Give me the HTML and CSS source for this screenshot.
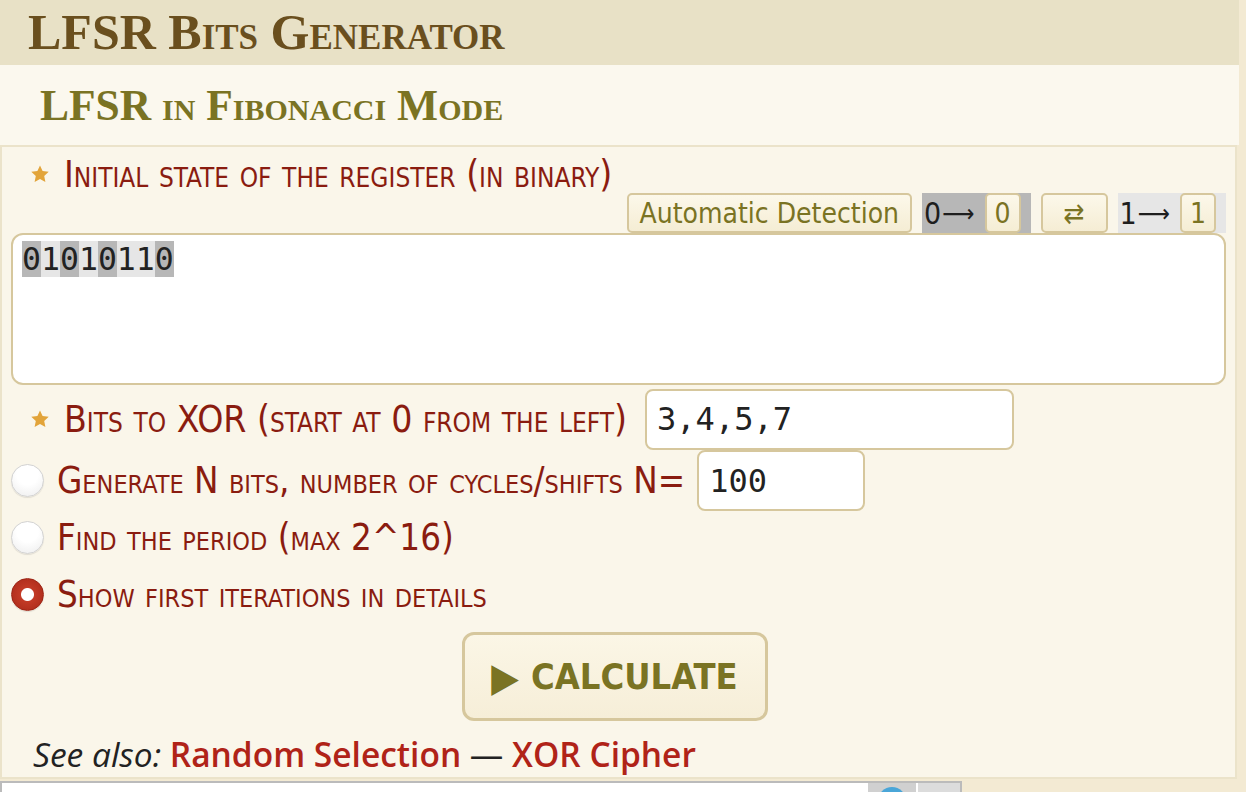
FILE: index.html
```html
<!DOCTYPE html>
<html lang="en">
<head>
    <meta charset="UTF-8">
    <title>LFSR Bits Generator</title>
    <link rel="stylesheet" href="styles.css">
</head>
<body>
  <div class="page">
    <div class="head">
        <h1>LFSR Bits Generator</h1>
    </div>
    <div class="sub">
        <h2>LFSR in Fibonacci Mode</h2>
    </div>

    <form class="tool">
        <div class="label first">
            <svg class="star" viewBox="0 0 20 20"><path d="M10 1.5l2.6 5.6 6.1.7-4.5 4.2 1.2 6-5.4-3-5.4 3 1.2-6-4.5-4.2 6.1-.7z"/></svg>
            <span>Initial state of the register (in binary)</span>
        </div>

        <div class="tools">
            <button type="button" class="btn">Automatic Detection</button>
            <span class="map zero">0<span class="arr">&#x27F6;</span><button type="button" class="btn small">0</button></span>
            <button type="button" class="btn swap">&#x21C4;</button>
            <span class="map one">1<span class="arr">&#x27F6;</span><button type="button" class="btn small">1</button></span>
        </div>

        <div class="area"><span class="b0">0</span><span class="b1">1</span><span class="b0">0</span><span class="b1">1</span><span class="b0">0</span><span class="b1">1</span><span class="b1">1</span><span class="b0">0</span></div>

        <div class="row xor">
            <svg class="star" viewBox="0 0 20 20"><path d="M10 1.5l2.6 5.6 6.1.7-4.5 4.2 1.2 6-5.4-3-5.4 3 1.2-6-4.5-4.2 6.1-.7z"/></svg>
            <span class="label">Bits to XOR (start at 0 from the left)</span>
            <input type="text" class="field wide" value="3,4,5,7">
        </div>

        <div class="row opt">
            <span class="radio"></span>
            <span class="label">Generate N bits, number of cycles/shifts N=</span>
            <input type="text" class="field short" value="100">
        </div>

        <div class="row opt">
            <span class="radio"></span>
            <span class="label">Find the period (max 2^16)</span>
        </div>

        <div class="row opt">
            <span class="radio on"></span>
            <span class="label">Show first iterations in details</span>
        </div>

        <div class="go">
            <button type="button" class="calc"><span class="play">&#x25B6;</span>CALCULATE</button>
        </div>

        <p class="also"><em>See also:</em> <a href="#">Random Selection</a> &mdash; <a href="#">XOR Cipher</a></p>
    </form>

    <div class="next">
        <div class="bar"></div>
        <span class="globe"><i></i></span>
        <span class="grey"></span>
    </div>
  </div>
</body>
</html>
```

FILE: styles.css
```css
*{
    margin: 0;
    padding: 0;
    box-sizing: border-box;
}
body{
    background: #f3ead3;
    font-family: "DejaVu Sans Condensed", sans-serif;
}
.page{
    width: 1239px;
}
.head{
    background: #e8e1c6;
    height: 65px;
    padding: 3px 0 0 28px;
}
.head h1{
    font-family: "Liberation Serif", serif;
    font-variant: small-caps;
    font-weight: bold;
    font-size: 50px;
    line-height: 58px;
    color: #6a4f1e;
}
.sub{
    background: #fbf8ee;
    height: 80px;
    padding: 15px 0 0 40px;
}
.sub h2{
    font-family: "Liberation Serif", serif;
    font-variant: small-caps;
    font-weight: bold;
    font-size: 43.5px;
    line-height: 50px;
    color: #7a7323;
}

/* the form box */
.tool{
    width: 1237px;
    background: #faf6ea;
    border: 2px solid #ebe3ca;
    padding: 8px 9px 12px 9px;
    height: 634px;
}
.star{
    width: 20px;
    height: 20px;
    fill: #e2a43a;
    filter: blur(0.5px);
    margin: 0 14px 0 19px;
    flex: none;
}
.label{
    font-variant: small-caps;
    font-size: 37px;
    color: #8a1c10;
    white-space: nowrap;
}
.label.first{
    display: flex;
    align-items: center;
    height: 38px;
}
.tools{
    display: flex;
    justify-content: flex-end;
    align-items: center;
    gap: 10px;
    height: 40px;
}
.btn{
    font-family: "DejaVu Sans Condensed", sans-serif;
    font-size: 28px;
    color: #7a7323;
    background: linear-gradient(#fcf8ea, #f5edd4);
    border: 2px solid #d6c79d;
    border-radius: 5px;
    height: 40px;
    padding: 0 11px;
}
.btn.small{
    padding: 0 8px;
    height: 40px;
}
.btn.swap{
    width: 67px;
    font-size: 28px;
}
.map{
    display: flex;
    align-items: center;
    height: 40px;
    font-family: "DejaVu Sans Condensed", sans-serif;
    font-size: 30px;
    color: #1e1e1e;
    padding: 0 10px 0 2px;
}
.map .arr{
    font-size: 25px;
    margin: 0 10px 0 1px;
}
.map.zero{
    background: #b7b7b7;
}
.map.one{
    background: #e6e6e6;
}
.area{
    height: 152px;
    background: #fff;
    border: 2px solid #d6c79d;
    border-radius: 12px;
    padding: 6px 9px;
    font-family: "DejaVu Sans Mono", monospace;
    font-size: 31.5px;
    line-height: 36px;
    color: #222;
}
.b0{ background: #b7b7b7; }
.b1{ background: #e6e6e6; }

.row{
    display: flex;
    align-items: center;
}
.row.xor{
    height: 66px;
    margin-top: 1px;
}
.row.xor .label{
    margin-right: 18px;
}
.opt{
    height: 57px;
}
.opt .label{
    margin-left: 13px;
    font-size: 36.4px;
}
.field{
    font-family: "DejaVu Sans Mono", monospace;
    font-size: 32px;
    color: #222;
    border: 2px solid #d6c79d;
    border-radius: 8px;
    height: 61px;
    padding: 0 10px;
    background: #fff;
}
.field.wide{ width: 369px; }
.field.short{ width: 168px; margin-left: 12px; }

.radio{
    width: 33px;
    height: 33px;
    border-radius: 50%;
    flex: none;
    background: radial-gradient(circle at 50% 30%, #fff 40%, #ececec 100%);
    border: 1px solid #d2d2d2;
    box-shadow: 0 1px 1px rgba(0,0,0,0.1);
}
.radio.on{
    background: radial-gradient(circle, #fff 0 6px, #c23a26 7px, #a82818 100%);
    border-color: #9c2415;
}

.go{
    display: flex;
    justify-content: center;
    padding: 9px 0 0 0;
    margin-left: -8px;
}
.calc{
    display: flex;
    align-items: center;
    justify-content: center;
    width: 306px;
    height: 89px;
    border: 3px solid #d6c79d;
    border-radius: 12px;
    background: linear-gradient(#fbf6e6, #f6eed8);
    font-family: "DejaVu Sans Condensed", sans-serif;
    font-weight: bold;
    font-size: 36px;
    color: #7a7323;
}
.calc .play{
    font-size: 40px;
    margin-right: 12px;
}
.also{
    font-family: "Open Sans", sans-serif;
    font-size: 33.5px;
    padding: 10px 0 0 22px;
    color: #222;
}
.also a{
    color: #b02318;
    font-weight: 600;
    text-decoration: none;
}
.next{
    display: flex;
    height: 14px;
    width: 962px;
    margin-top: 2px;
    border: 2px solid #bbb;
    border-bottom: 0;
    background: #fff;
}
.next .bar{
    flex: 1;
}
.next .globe{
    width: 48px;
    background: #d0d0d0;
    display: flex;
    justify-content: center;
    overflow: hidden;
}
.next .globe i{
    width: 28px;
    height: 28px;
    margin-top: 4px;
    border-radius: 50%;
    background: #4aa6d8;
}
.next .grey{
    width: 44px;
    background: #dcdcdc;
    border-left: 2px solid #fff;
}
```
